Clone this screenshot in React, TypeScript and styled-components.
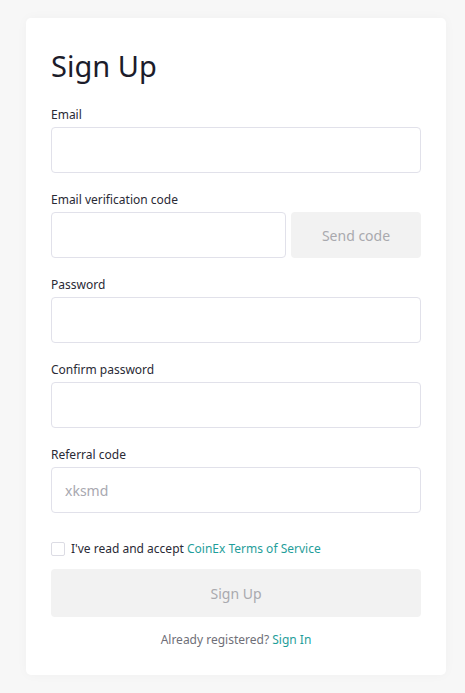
import React, { useState } from "react";
import styled, { createGlobalStyle } from "styled-components";

const GlobalStyle = createGlobalStyle`
  * { box-sizing: border-box; }
  body {
    margin: 0;
    background: #f7f7f7;
    font-family: "Noto Sans", "Open Sans", sans-serif;
    color: #1c1c2b;
  }
`;

const Page = styled.div`
  padding: 18px 19px 20px 26px;
`;

const Card = styled.form`
  width: 420px;
  background: #fff;
  border-radius: 5px;
  box-shadow: 0 0 12px rgba(0, 0, 0, 0.03);
  padding: 30px 25px 26px;
  display: flex;
  flex-direction: column;
`;

const Title = styled.h1`
  margin: 0 0 22px;
  font-size: 29px;
  line-height: 36px;
  font-weight: 400;
  color: #1c1c2b;
`;

const Field = styled.div`
  display: flex;
  flex-direction: column;
  gap: 3px;
  margin-bottom: 18px;
`;

const Label = styled.label`
  font-size: 12px;
  line-height: 18px;
  color: #2a2a35;
`;

const Row = styled.div`
  display: flex;
  gap: 5px;
`;

const Input = styled.input`
  flex: 1;
  min-width: 0;
  height: 46px;
  border: 1px solid #e1e1ea;
  border-radius: 4px;
  padding: 0 13px;
  font: inherit;
  font-size: 14px;
  color: #1c1c2b;
  outline: none;
  &::placeholder { color: #a8a8b0; }
`;

const GhostButton = styled.button<{ $wide?: boolean }>`
  width: ${(p) => (p.$wide ? "100%" : "130px")};
  height: ${(p) => (p.$wide ? "48px" : "46px")};
  border: none;
  border-radius: 4px;
  background: #f2f2f2;
  color: #a9a9ae;
  font: inherit;
  font-size: 14px;
  cursor: not-allowed;
`;

const Agree = styled.label`
  display: flex;
  align-items: center;
  gap: 6px;
  font-size: 12px;
  line-height: 18px;
  color: #2a2a35;
  margin: 9px 0 11px;
`;

const Box = styled.span`
  width: 14px;
  height: 14px;
  border: 1px solid #dcdce4;
  border-radius: 2px;
  background: #fff;
`;

const Link = styled.a`
  color: #1f9e9a;
  text-decoration: none;
`;

const Footer = styled.p`
  margin: 14px 0 0;
  text-align: center;
  font-size: 12px;
  line-height: 18px;
  color: #6f6f78;
`;

const fields = [
  { id: "email", label: "Email" },
  { id: "code", label: "Email verification code", send: true },
  { id: "password", label: "Password", type: "password" },
  { id: "confirm", label: "Confirm password", type: "password" },
  { id: "referral", label: "Referral code", placeholder: "xksmd" },
];

const App = () => {
  const [values, setValues] = useState<Record<string, string>>({});

  return (
    <>
      <GlobalStyle />
      <Page>
        <Card onSubmit={(e) => e.preventDefault()}>
          <Title>Sign Up</Title>
          {fields.map((f) => (
            <Field key={f.id}>
              <Label htmlFor={f.id}>{f.label}</Label>
              <Row>
                <Input
                  id={f.id}
                  type={f.type || "text"}
                  placeholder={f.placeholder}
                  value={values[f.id] || ""}
                  onChange={(e) => setValues({ ...values, [f.id]: e.target.value })}
                />
                {f.send && <GhostButton type="button">Send code</GhostButton>}
              </Row>
            </Field>
          ))}
          <Agree>
            <Box />
            <span>
              I've read and accept <Link href="#">CoinEx Terms of Service</Link>
            </span>
          </Agree>
          <GhostButton $wide type="submit">
            Sign Up
          </GhostButton>
          <Footer>
            Already registered? <Link href="#">Sign In</Link>
          </Footer>
        </Card>
      </Page>
    </>
  );
};

export default App;
